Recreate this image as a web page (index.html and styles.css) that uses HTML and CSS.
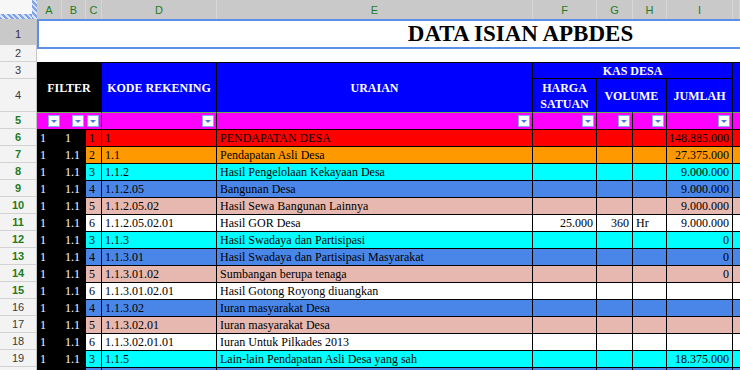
FILE: index.html
```html
<!DOCTYPE html>
<html lang="id">
  <head>
    <meta charset="UTF-8" />
    <title>DATA ISIAN APBDES</title>
    <link rel="stylesheet" href="styles.css">
  </head>
  <body>
    <div class="sheet">
      <div class="row colhead">
        <div class="corner"></div>
        <div class="ch">A</div><div class="ch">B</div><div class="ch">C</div>
        <div class="ch">D</div><div class="ch">E</div><div class="ch">F</div>
        <div class="ch">G</div><div class="ch">H</div><div class="ch">I</div>
        <div class="ch"></div>
      </div>

      <div class="row r1">
        <div class="rh sel">1</div>
        <div class="title">DATA ISIAN APBDES</div>
      </div>

      <div class="row r2">
        <div class="rh">2</div>
        <div class="blank"></div>
      </div>

      <div class="head">
        <div class="rh h3">3</div>
        <div class="rh h4">4</div>
        <div class="hd filter">FILTER</div>
        <div class="hd kode">KODE REKENING</div>
        <div class="hd uraian">URAIAN</div>
        <div class="hd kas">KAS DESA</div>
        <div class="hd extra"></div>
        <div class="hd sub harga">HARGA<br>SATUAN</div>
        <div class="hd sub volume">VOLUME</div>
        <div class="hd sub jumlah">JUMLAH</div>
      </div>

      <div class="row filt">
        <div class="rh g">5</div>
        <div class="c fa"><span class="fb"></span></div>
        <div class="c fa"><span class="fb"></span></div>
        <div class="c fa ln"><span class="fb"></span></div>
        <div class="c fa ln"><span class="fb"></span></div>
        <div class="c fa ln"><span class="fb"></span></div>
        <div class="c fa ln"><span class="fb"></span></div>
        <div class="c fa ln"><span class="fb"></span></div>
        <div class="c fa ln"><span class="fb"></span></div>
        <div class="c fa ln"><span class="fb"></span></div>
        <div class="c"></div>
      </div>

      <div class="row data lv1">
        <div class="rh g">6</div>
        <div class="c k">1</div><div class="c k">1</div>
        <div class="c ln">1</div><div class="c ln">1</div>
        <div class="c ln">PENDAPATAN DESA</div>
        <div class="c ln"></div><div class="c ln"></div><div class="c ln"></div>
        <div class="c ln num">148.885.000</div><div class="c"></div>
      </div>
      <div class="row data lv2">
        <div class="rh g">7</div>
        <div class="c k">1</div><div class="c k">1.1</div>
        <div class="c ln">2</div><div class="c ln">1.1</div>
        <div class="c ln">Pendapatan Asli Desa</div>
        <div class="c ln"></div><div class="c ln"></div><div class="c ln"></div>
        <div class="c ln num">27.375.000</div><div class="c"></div>
      </div>
      <div class="row data lv3">
        <div class="rh g">8</div>
        <div class="c k">1</div><div class="c k">1.1</div>
        <div class="c ln">3</div><div class="c ln">1.1.2</div>
        <div class="c ln">Hasil Pengelolaan Kekayaan Desa</div>
        <div class="c ln"></div><div class="c ln"></div><div class="c ln"></div>
        <div class="c ln num">9.000.000</div><div class="c"></div>
      </div>
      <div class="row data lv4">
        <div class="rh g">9</div>
        <div class="c k">1</div><div class="c k">1.1</div>
        <div class="c ln">4</div><div class="c ln">1.1.2.05</div>
        <div class="c ln">Bangunan Desa</div>
        <div class="c ln"></div><div class="c ln"></div><div class="c ln"></div>
        <div class="c ln num">9.000.000</div><div class="c"></div>
      </div>
      <div class="row data lv5">
        <div class="rh g">10</div>
        <div class="c k">1</div><div class="c k">1.1</div>
        <div class="c ln">5</div><div class="c ln">1.1.2.05.02</div>
        <div class="c ln">Hasil Sewa Bangunan Lainnya</div>
        <div class="c ln"></div><div class="c ln"></div><div class="c ln"></div>
        <div class="c ln num">9.000.000</div><div class="c"></div>
      </div>
      <div class="row data lv6">
        <div class="rh g">11</div>
        <div class="c k">1</div><div class="c k">1.1</div>
        <div class="c ln">6</div><div class="c ln">1.1.2.05.02.01</div>
        <div class="c ln">Hasil GOR Desa</div>
        <div class="c ln num">25.000</div><div class="c ln num">360</div><div class="c ln">Hr</div>
        <div class="c ln num">9.000.000</div><div class="c"></div>
      </div>
      <div class="row data lv3">
        <div class="rh g">12</div>
        <div class="c k">1</div><div class="c k">1.1</div>
        <div class="c ln">3</div><div class="c ln">1.1.3</div>
        <div class="c ln">Hasil Swadaya dan Partisipasi</div>
        <div class="c ln"></div><div class="c ln"></div><div class="c ln"></div>
        <div class="c ln num">0</div><div class="c"></div>
      </div>
      <div class="row data lv4">
        <div class="rh g">13</div>
        <div class="c k">1</div><div class="c k">1.1</div>
        <div class="c ln">4</div><div class="c ln">1.1.3.01</div>
        <div class="c ln">Hasil Swadaya dan Partisipasi Masyarakat</div>
        <div class="c ln"></div><div class="c ln"></div><div class="c ln"></div>
        <div class="c ln num">0</div><div class="c"></div>
      </div>
      <div class="row data lv5">
        <div class="rh g">14</div>
        <div class="c k">1</div><div class="c k">1.1</div>
        <div class="c ln">5</div><div class="c ln">1.1.3.01.02</div>
        <div class="c ln">Sumbangan berupa tenaga</div>
        <div class="c ln"></div><div class="c ln"></div><div class="c ln"></div>
        <div class="c ln num">0</div><div class="c"></div>
      </div>
      <div class="row data lv6">
        <div class="rh g">15</div>
        <div class="c k">1</div><div class="c k">1.1</div>
        <div class="c ln">6</div><div class="c ln">1.1.3.01.02.01</div>
        <div class="c ln">Hasil Gotong Royong diuangkan</div>
        <div class="c ln"></div><div class="c ln"></div><div class="c ln"></div>
        <div class="c ln num"></div><div class="c"></div>
      </div>
      <div class="row data lv4">
        <div class="rh">16</div>
        <div class="c k">1</div><div class="c k">1.1</div>
        <div class="c ln">4</div><div class="c ln">1.1.3.02</div>
        <div class="c ln">Iuran masyarakat Desa</div>
        <div class="c ln"></div><div class="c ln"></div><div class="c ln"></div>
        <div class="c ln num"></div><div class="c"></div>
      </div>
      <div class="row data lv5">
        <div class="rh">17</div>
        <div class="c k">1</div><div class="c k">1.1</div>
        <div class="c ln">5</div><div class="c ln">1.1.3.02.01</div>
        <div class="c ln">Iuran masyarakat Desa</div>
        <div class="c ln"></div><div class="c ln"></div><div class="c ln"></div>
        <div class="c ln num"></div><div class="c"></div>
      </div>
      <div class="row data lv6">
        <div class="rh">18</div>
        <div class="c k">1</div><div class="c k">1.1</div>
        <div class="c ln">6</div><div class="c ln">1.1.3.02.01.01</div>
        <div class="c ln">Iuran Untuk Pilkades 2013</div>
        <div class="c ln"></div><div class="c ln"></div><div class="c ln"></div>
        <div class="c ln num"></div><div class="c"></div>
      </div>
      <div class="row data lv3">
        <div class="rh">19</div>
        <div class="c k">1</div><div class="c k">1.1</div>
        <div class="c ln">3</div><div class="c ln">1.1.5</div>
        <div class="c ln">Lain-lain Pendapatan Asli Desa yang sah</div>
        <div class="c ln"></div><div class="c ln"></div><div class="c ln"></div>
        <div class="c ln num">18.375.000</div><div class="c"></div>
      </div>
      <div class="row data lv4">
        <div class="rh"></div>
        <div class="c k"></div><div class="c k"></div>
        <div class="c ln"></div><div class="c ln"></div>
        <div class="c ln"></div>
        <div class="c ln"></div><div class="c ln"></div><div class="c ln"></div>
        <div class="c ln num"></div><div class="c"></div>
      </div>
    </div>
  </body>
</html>
```

FILE: styles.css
```css
html,
body {
  margin: 0;
  padding: 0;
  background: #ffffff;
  overflow: hidden;
}
.sheet {
  --cols: 37px 25px 24px 16px 115px 316px 64px 36px 34px 66px 1fr;
  width: 740px;
  font-family: "Liberation Serif", "Times New Roman", serif;
  font-size: 12px;
  color: #000000;
}
.row {
  display: grid;
  grid-template-columns: var(--cols);
  height: 17px;
}
.row > div,
.head > div {
  box-sizing: border-box;
  min-width: 0;
}

/* column letters */
.colhead {
  height: 19px;
  background: #c9c9c9;
}
.corner {
  background:
    repeating-linear-gradient(45deg, #7fa2ea 0 2px, #d9e4fa 2px 4px) right top / 5px 100% no-repeat,
    repeating-linear-gradient(45deg, #7fa2ea 0 2px, #d9e4fa 2px 4px) left bottom / 100% 5px no-repeat,
    #f7f7f7;
}
.ch {
  display: flex;
  align-items: center;
  justify-content: center;
  border-right: 1px solid #d6d6d6;
  font-family: "Liberation Sans", Arial, sans-serif;
  font-size: 11px;
  color: #1e7b1e;
}

/* row numbers */
.rh {
  display: flex;
  align-items: center;
  justify-content: center;
  background: #f3f3f3;
  border-right: 1px solid #c4c4c4;
  border-bottom: 1px solid #d2d2d2;
  font-family: "Liberation Sans", Arial, sans-serif;
  font-size: 11px;
  color: #3a3a3a;
}
.rh.sel {
  background: #c9c9c9;
  color: #3b2a4a;
}
.rh.g {
  color: #1e7b1e;
  font-weight: bold;
}

/* title row */
.r1 {
  height: 26px;
}
.title {
  grid-column: 2 / -1;
  display: flex;
  align-items: center;
  justify-content: center;
  padding-left: 262px;
  border: 2px solid #5b8fe8;
  border-right: none;
  font-size: 23px;
  font-weight: bold;
  white-space: nowrap;
}
.blank {
  grid-column: 2 / -1;
}

/* header block */
.head {
  display: grid;
  grid-template-columns: var(--cols);
  grid-template-rows: 17px 33px;
}
.h3 {
  grid-column: 1;
  grid-row: 1;
}
.h4 {
  grid-column: 1;
  grid-row: 2;
}
.hd {
  display: flex;
  align-items: center;
  justify-content: center;
  text-align: center;
  background: #0000ff;
  color: #ffffff;
  font-weight: bold;
  font-size: 12px;
  line-height: 16px;
  border-right: 1px solid #000000;
  white-space: nowrap;
}
.filter {
  grid-column: 2 / 5;
  grid-row: 1 / 3;
  background: #000000;
  border-top: 1px solid #000000;
}
.kode {
  grid-column: 5;
  grid-row: 1 / 3;
  border-top: 1px solid #000000;
}
.uraian {
  grid-column: 6;
  grid-row: 1 / 3;
  border-top: 1px solid #000000;
}
.kas {
  grid-column: 7 / 11;
  grid-row: 1;
  border-top: 1px solid #000000;
  border-bottom: 1px solid #000000;
}
.extra {
  grid-column: 11;
  grid-row: 1 / 3;
  border-top: 1px solid #000000;
  border-right: none;
}
.harga {
  grid-column: 7;
  grid-row: 2;
}
.volume {
  grid-column: 8 / 10;
  grid-row: 2;
}
.jumlah {
  grid-column: 10;
  grid-row: 2;
}

/* cells */
.c {
  display: flex;
  align-items: flex-end;
  padding: 0 3px;
  white-space: nowrap;
  overflow: hidden;
}
.c.num {
  justify-content: flex-end;
}
.ln {
  border-right: 1px solid #000000;
}
.data .c {
  border-top: 1px solid #000000;
}
.data .c.k {
  background: #000000;
  color: #ffffff;
}

/* filter row */
.filt {
  background: #ff00ff;
}
.filt .c {
  border-top: 1px solid #6ab04c;
}
.c.fa {
  align-items: flex-start;
  justify-content: flex-end;
  padding: 2px 2px 0 0;
}
.fb {
  width: 12px;
  height: 12px;
  box-sizing: border-box;
  border: 1px solid #8aa8ef;
  background: #ffffff;
  display: flex;
  align-items: center;
  justify-content: center;
}
.fb::after {
  content: "";
  border-left: 3px solid transparent;
  border-right: 3px solid transparent;
  border-top: 3px solid #4f74d6;
  margin-top: 1px;
}

/* level colours */
.lv1 {
  background: #ff0000;
}
.lv2 {
  background: #ff9900;
}
.lv3 {
  background: #00ffff;
}
.lv4 {
  background: #4a86e8;
}
.lv5 {
  background: #e6b8af;
}
.lv6 {
  background: #ffffff;
}
```
